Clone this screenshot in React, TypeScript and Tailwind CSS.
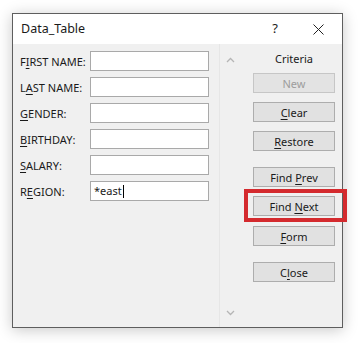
import React from "react";

const font = { fontFamily: '"Noto Sans", "Open Sans", sans-serif' };

function Label({ pre, u, post }: { pre: string; u: string; post: string }) {
  return (
    <span className="w-[70px] shrink-0 text-[11px] text-[#1a1a1a] leading-none">
      {pre}
      <span className="underline underline-offset-[2px] decoration-[1px]">{u}</span>
      {post}
    </span>
  );
}

function Row({ pre, u, post, value }: { pre: string; u: string; post: string; value?: string }) {
  return (
    <div className="flex items-center h-[20px]">
      <Label pre={pre} u={u} post={post} />
      <div className="w-[119px] h-[20px] bg-white border border-[#a9a9a9] flex items-center pl-[3px] text-[11px] text-[#1a1a1a]">
        {value}
        {value && <span className="w-px h-[13px] bg-black ml-[1px]" />}
      </div>
    </div>
  );
}

function Btn({
  pre,
  u,
  post,
  mt,
  disabled,
}: {
  pre: string;
  u: string;
  post: string;
  mt: string;
  disabled?: boolean;
}) {
  return (
    <div
      className={`${mt} w-[82px] h-[20px] flex items-center justify-center text-[11px] leading-none border ${
        disabled ? "bg-[#e3e3e3] border-[#c6c6c6] text-[#9d9d9d]" : "bg-[#e1e1e1] border-[#adadad] text-[#1a1a1a]"
      }`}
    >
      <span className="whitespace-pre">
        {pre}
        {disabled ? u : <span className="underline underline-offset-[2px] decoration-[1px]">{u}</span>}
        {post}
      </span>
    </div>
  );
}

export default function App() {
  return (
    <div className="w-[360px] h-[343px] bg-white pt-[13px] pl-[12px]" style={font}>
      <div className="w-[331px] h-[315px] border border-[#5e5e5e] shadow-[0_2px_14px_rgba(0,0,0,0.22)] flex flex-col">
        <div className="h-[30px] bg-white flex items-center shrink-0">
          <span className="pl-[8px] text-[12.5px] text-[#1a1a1a]">Data_Table</span>
          <span className="ml-auto text-[13px] text-[#1a1a1a] mr-[35px]">?</span>
          <svg width="11" height="11" viewBox="0 0 11 11" className="mr-[18px]">
            <path d="M0.5 0.5 L10.5 10.5 M10.5 0.5 L0.5 10.5" stroke="#222" strokeWidth="1" />
          </svg>
        </div>
        <div className="flex-1 bg-[#f0f0f0] flex">
          <div className="w-[206px] pt-[7px] pl-[7px] flex flex-col gap-[6px]">
            <Row pre="F" u="I" post="RST NAME:" />
            <Row pre="L" u="A" post="ST NAME:" />
            <Row pre="" u="G" post="ENDER:" />
            <Row pre="" u="B" post="IRTHDAY:" />
            <Row pre="" u="S" post="ALARY:" />
            <Row pre="R" u="E" post="GION:" value="*east" />
          </div>
          <div className="w-[22px] border-l border-[#e6e6e6] flex flex-col items-center justify-between pt-[13px] pb-[11px]">
            <svg width="9" height="6" viewBox="0 0 9 6">
              <path d="M1 5 L4.5 1.5 L8 5" fill="none" stroke="#b5b5b5" strokeWidth="1.3" />
            </svg>
            <svg width="9" height="6" viewBox="0 0 9 6">
              <path d="M1 1 L4.5 4.5 L8 1" fill="none" stroke="#b5b5b5" strokeWidth="1.3" />
            </svg>
          </div>
          <div className="flex-1 pl-[12px] pt-[7px] flex flex-col">
            <div className="w-[82px] h-[16px] flex items-center justify-center text-[11px] text-[#1a1a1a]">Criteria</div>
            <Btn mt="mt-[6px]" pre="Ne" u="w" post="" disabled />
            <Btn mt="mt-[9px]" pre="" u="C" post="lear" />
            <Btn mt="mt-[9px]" pre="" u="R" post="estore" />
            <Btn mt="mt-[16px]" pre="Find " u="P" post="rev" />
            <div className="relative mt-[9px]">
              <Btn mt="mt-0" pre="Find " u="N" post="ext" />
              <div className="absolute left-[-9px] right-[-5px] top-[-7px] bottom-[-6px] border-[4px] border-[#d42a2e]" />
            </div>
            <Btn mt="mt-[10px]" pre="" u="F" post="orm" />
            <Btn mt="mt-[16px]" pre="C" u="l" post="ose" />
          </div>
        </div>
      </div>
    </div>
  );
}
